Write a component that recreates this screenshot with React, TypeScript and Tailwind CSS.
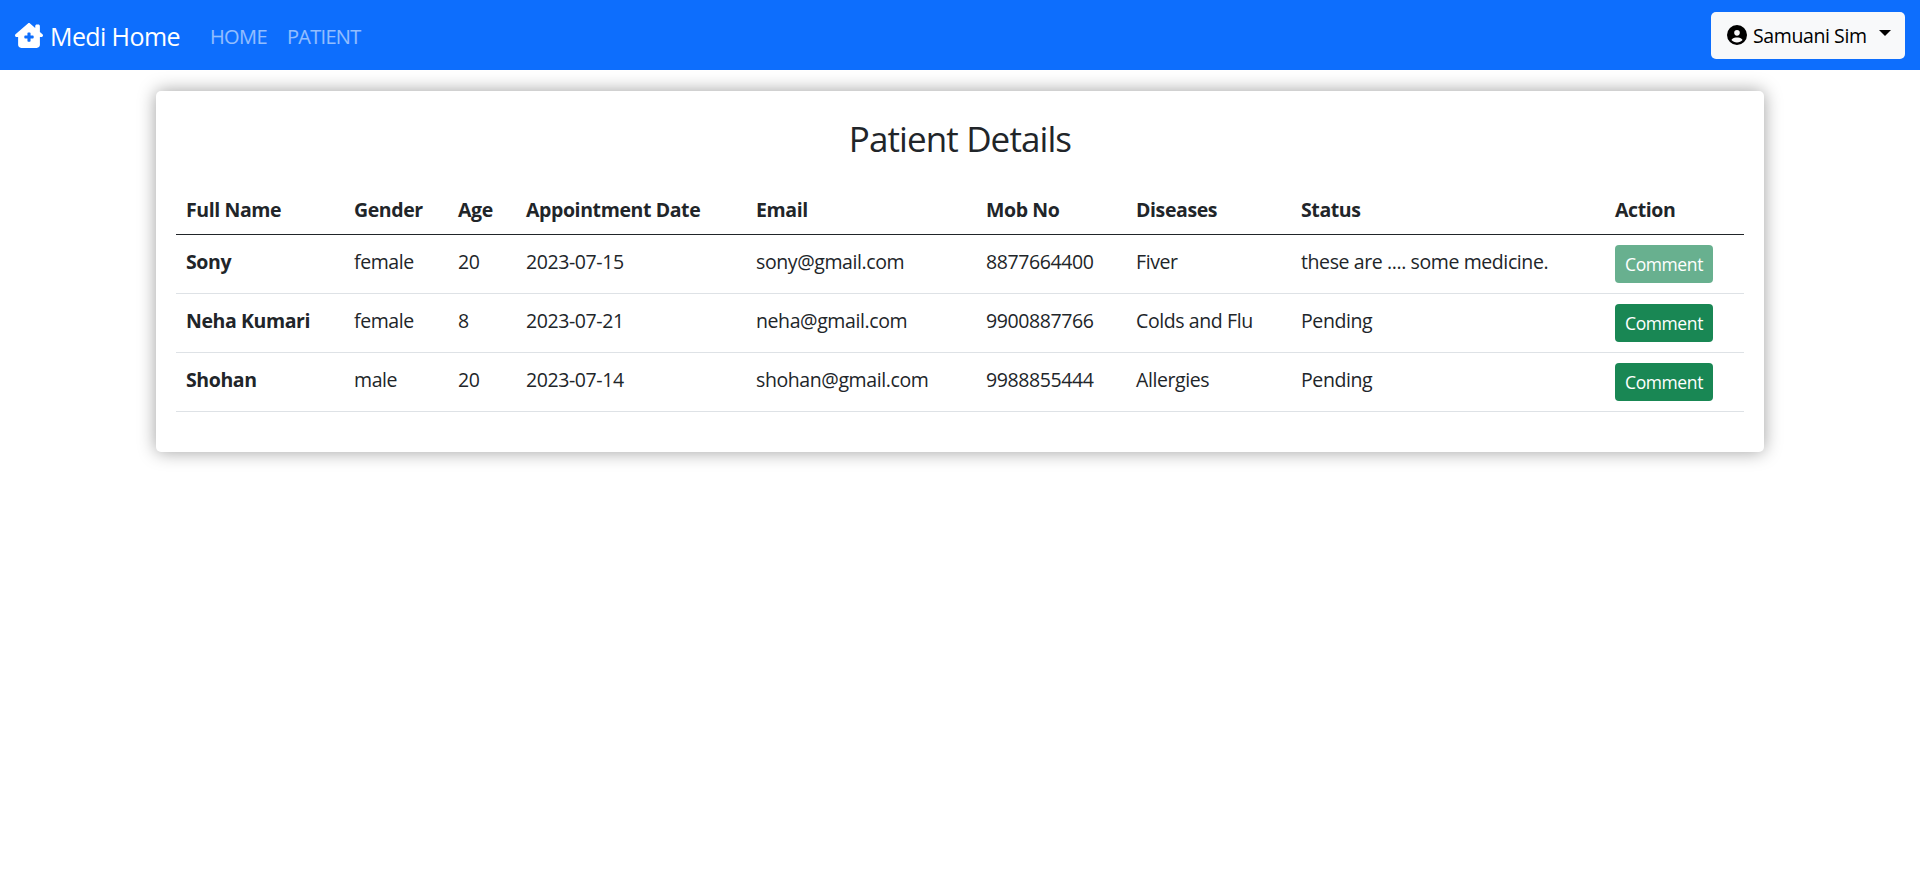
import { FaCircleUser, FaHouseChimneyMedical } from "react-icons/fa6"

const rows = [
    { name: "Sony", gender: "female", age: "20", date: "2023-07-15", email: "sony@gmail.com", mob: "8877664400", disease: "Fiver", status: "these are .... some medicine.", disabled: true },
    { name: "Neha Kumari", gender: "female", age: "8", date: "2023-07-21", email: "neha@gmail.com", mob: "9900887766", disease: "Colds and Flu", status: "Pending", disabled: false },
    { name: "Shohan", gender: "male", age: "20", date: "2023-07-14", email: "shohan@gmail.com", mob: "9988855444", disease: "Allergies", status: "Pending", disabled: false },
]

const heads = ["Full Name", "Gender", "Age", "Appointment Date", "Email", "Mob No", "Diseases", "Status", "Action"]
const widths = ["w-[168px]", "w-[104px]", "w-[68px]", "w-[230px]", "w-[230px]", "w-[150px]", "w-[165px]", "w-[314px]", "w-[139px]"]

const App = () => {
    return (
        <div className="min-h-[878px] bg-white font-['Open_Sans','Liberation_Sans',sans-serif] text-[19.5px] tracking-[-0.4px] text-[#212529]">
            <nav className="h-[70px] bg-[#0d6efd] flex items-center justify-between px-[15px]">
                <div className="flex items-center pt-[3px]">
                    <a className="flex items-center text-white text-[25px] leading-none tracking-[-0.6px]">
                        <FaHouseChimneyMedical className="w-[28px] h-[25px] mr-[7px] mb-[2px]" />
                        Medi Home
                    </a>
                    <a className="ml-[30px] text-[20px] tracking-[-0.6px] text-white/55">HOME</a>
                    <a className="ml-[20px] text-[20px] tracking-[-0.7px] text-white/55">PATIENT</a>
                </div>
                <button className="h-[47px] w-[194px] bg-[#f8f9fa] rounded-[5px] flex items-center pl-[16px] text-black">
                    <FaCircleUser className="w-[20px] h-[20px] mr-[6px]" />
                    <span className="pt-[2px]">Samuani Sim</span>
                    <span className="ml-[12px] mb-[4px] border-t-[6px] border-x-[6px] border-t-black border-x-transparent"></span>
                </button>
            </nav>

            <div className="mt-[21px] mx-auto w-[1608px] bg-white rounded-[5px] p-[20px] pb-[40px] shadow-[0_0_18px_rgba(0,0,0,0.38)]">
                <h2 className="text-center text-[35px] leading-[42px] tracking-[-0.9px] mt-[7px] mb-[25px]">Patient Details</h2>
                <table className="w-[1568px] table-fixed border-collapse">
                    <thead>
                        <tr className="border-b border-[#212529]">
                            {heads.map((h, i) => (
                                <th key={i} className={`${widths[i]} px-[10px] py-[10px] text-left font-bold leading-[29px]`}>{h}</th>
                            ))}
                        </tr>
                    </thead>
                    <tbody>
                        {rows.map((r, i) => (
                            <tr key={i} className="border-b border-[#dee2e6] h-[59px]">
                                <td className="px-[10px] pb-[5px] font-bold">{r.name}</td>
                                <td className="px-[10px] pb-[5px]">{r.gender}</td>
                                <td className="px-[10px] pb-[5px]">{r.age}</td>
                                <td className="px-[10px] pb-[5px]">{r.date}</td>
                                <td className="px-[10px] pb-[5px]">{r.email}</td>
                                <td className="px-[10px] pb-[5px]">{r.mob}</td>
                                <td className="px-[10px] pb-[5px]">{r.disease}</td>
                                <td className="px-[10px] pb-[5px]">{r.status}</td>
                                <td className="px-[10px]">
                                    <button className={`block w-[98px] h-[38px] pt-[1px] bg-[#198754] text-white text-[17.5px] rounded-[4px] ${r.disabled ? "opacity-65" : ""}`}>
                                        Comment
                                    </button>
                                </td>
                            </tr>
                        ))}
                    </tbody>
                </table>
            </div>
        </div>
    )
}

export default App
